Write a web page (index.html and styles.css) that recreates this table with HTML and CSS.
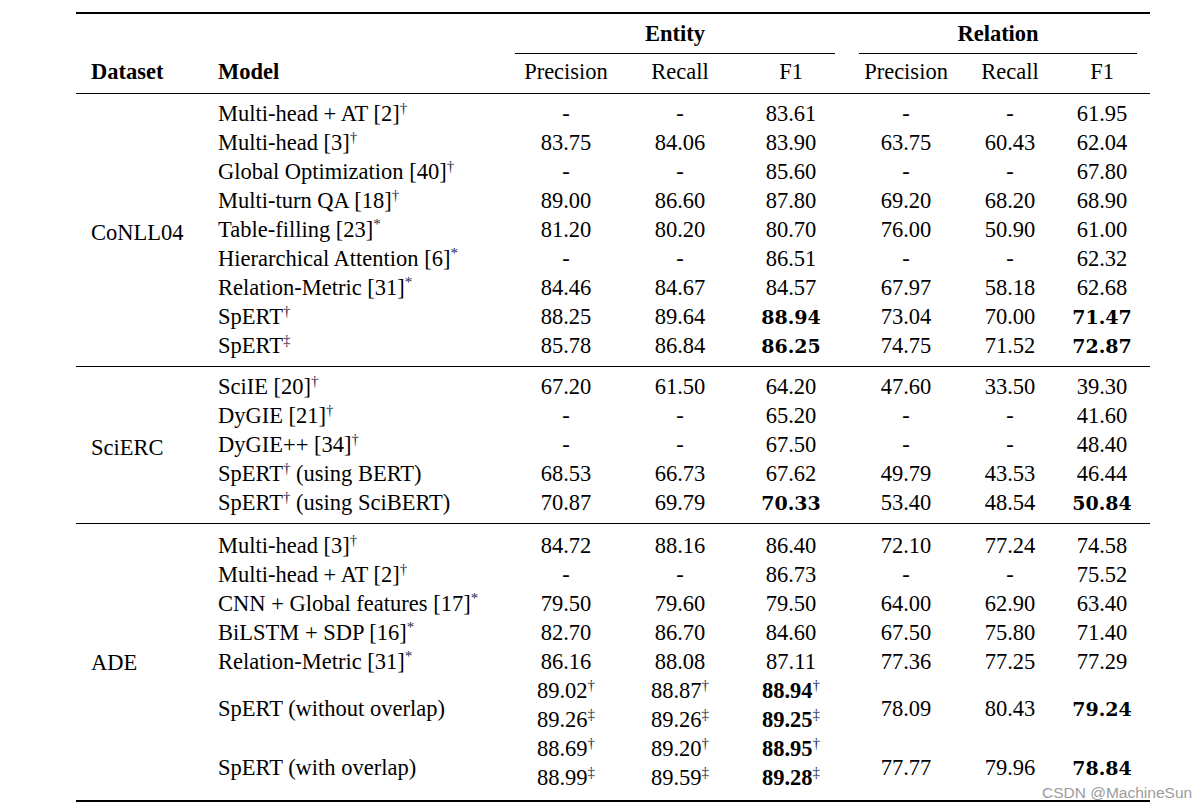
FILE: index.html
```html
<!DOCTYPE html>
<html>
<head>
<meta charset="utf-8">
<link rel="stylesheet" href="styles.css">
</head>
<body>
<div class="page">
<table class="results">
  <colgroup>
    <col class="c-ds"><col class="c-model"><col class="c-ep"><col class="c-er"><col class="c-ef"><col class="c-rp"><col class="c-rr"><col class="c-rf">
  </colgroup>
  <thead>
    <tr class="grp">
      <th></th><th></th>
      <th colspan="3"><div class="cmid cmid-e">Entity</div></th>
      <th colspan="3"><div class="cmid cmid-r">Relation</div></th>
    </tr>
    <tr class="cols">
      <th class="left bold">Dataset</th>
      <th class="left bold">Model</th>
      <th>Precision</th><th>Recall</th><th>F1</th>
      <th>Precision</th><th>Recall</th><th>F1</th>
    </tr>
  </thead>
  <tbody>
    <tr class="first">
      <td class="ds" rowspan="9">CoNLL04</td>
      <td class="model">Multi-head + AT [2]<span class="sup">†</span></td>
      <td>-</td><td>-</td><td>83.61</td><td>-</td><td>-</td><td>61.95</td>
    </tr>
    <tr><td class="model">Multi-head [3]<span class="sup">†</span></td><td>83.75</td><td>84.06</td><td>83.90</td><td>63.75</td><td>60.43</td><td>62.04</td></tr>
    <tr><td class="model">Global Optimization [40]<span class="sup">†</span></td><td>-</td><td>-</td><td>85.60</td><td>-</td><td>-</td><td>67.80</td></tr>
    <tr><td class="model">Multi-turn QA [18]<span class="sup">†</span></td><td>89.00</td><td>86.60</td><td>87.80</td><td>69.20</td><td>68.20</td><td>68.90</td></tr>
    <tr><td class="model">Table-filling [23]<span class="sup">*</span></td><td>81.20</td><td>80.20</td><td>80.70</td><td>76.00</td><td>50.90</td><td>61.00</td></tr>
    <tr><td class="model">Hierarchical Attention [6]<span class="sup">*</span></td><td>-</td><td>-</td><td>86.51</td><td>-</td><td>-</td><td>62.32</td></tr>
    <tr><td class="model">Relation-Metric [31]<span class="sup">*</span></td><td>84.46</td><td>84.67</td><td>84.57</td><td>67.97</td><td>58.18</td><td>62.68</td></tr>
    <tr><td class="model">SpERT<span class="sup">†</span></td><td>88.25</td><td>89.64</td><td><span class="bx">88.94</span></td><td>73.04</td><td>70.00</td><td><span class="bx">71.47</span></td></tr>
    <tr class="last"><td class="model">SpERT<span class="sup">‡</span></td><td>85.78</td><td>86.84</td><td><span class="bx">86.25</span></td><td>74.75</td><td>71.52</td><td><span class="bx">72.87</span></td></tr>
  </tbody>
  <tbody>
    <tr class="first">
      <td class="ds" rowspan="5">SciERC</td>
      <td class="model">SciIE [20]<span class="sup">†</span></td>
      <td>67.20</td><td>61.50</td><td>64.20</td><td>47.60</td><td>33.50</td><td>39.30</td>
    </tr>
    <tr><td class="model">DyGIE [21]<span class="sup">†</span></td><td>-</td><td>-</td><td>65.20</td><td>-</td><td>-</td><td>41.60</td></tr>
    <tr><td class="model">DyGIE++ [34]<span class="sup">†</span></td><td>-</td><td>-</td><td>67.50</td><td>-</td><td>-</td><td>48.40</td></tr>
    <tr><td class="model">SpERT<span class="sup">†</span> (using BERT)</td><td>68.53</td><td>66.73</td><td>67.62</td><td>49.79</td><td>43.53</td><td>46.44</td></tr>
    <tr class="last"><td class="model">SpERT<span class="sup">†</span> (using SciBERT)</td><td>70.87</td><td>69.79</td><td><span class="bx">70.33</span></td><td>53.40</td><td>48.54</td><td><span class="bx">50.84</span></td></tr>
  </tbody>
  <tbody class="ade">
    <tr class="first">
      <td class="ds" rowspan="9">ADE</td>
      <td class="model">Multi-head [3]<span class="sup">†</span></td>
      <td>84.72</td><td>88.16</td><td>86.40</td><td>72.10</td><td>77.24</td><td>74.58</td>
    </tr>
    <tr><td class="model">Multi-head + AT [2]<span class="sup">†</span></td><td>-</td><td>-</td><td>86.73</td><td>-</td><td>-</td><td>75.52</td></tr>
    <tr><td class="model">CNN + Global features [17]<span class="sup">*</span></td><td>79.50</td><td>79.60</td><td>79.50</td><td>64.00</td><td>62.90</td><td>63.40</td></tr>
    <tr><td class="model">BiLSTM + SDP [16]<span class="sup">*</span></td><td>82.70</td><td>86.70</td><td>84.60</td><td>67.50</td><td>75.80</td><td>71.40</td></tr>
    <tr><td class="model">Relation-Metric [31]<span class="sup">*</span></td><td>86.16</td><td>88.08</td><td>87.11</td><td>77.36</td><td>77.25</td><td>77.29</td></tr>
    <tr>
      <td class="model pair" rowspan="2">SpERT (without overlap)</td>
      <td>89.02<span class="sup">†</span></td><td>88.87<span class="sup">†</span></td><td><b>88.94</b><span class="sup">†</span></td>
      <td class="pair" rowspan="2">78.09</td><td class="pair" rowspan="2">80.43</td><td class="pair" rowspan="2"><span class="bx">79.24</span></td>
    </tr>
    <tr>
      <td>89.26<span class="sup">‡</span></td><td>89.26<span class="sup">‡</span></td><td><b>89.25</b><span class="sup">‡</span></td>
    </tr>
    <tr>
      <td class="model" rowspan="2">SpERT (with overlap)</td>
      <td>88.69<span class="sup">†</span></td><td>89.20<span class="sup">†</span></td><td><b>88.95</b><span class="sup">†</span></td>
      <td rowspan="2">77.77</td><td rowspan="2">79.96</td><td rowspan="2"><span class="bx">78.84</span></td>
    </tr>
    <tr class="last">
      <td>88.99<span class="sup">‡</span></td><td>89.59<span class="sup">‡</span></td><td><b>89.28</b><span class="sup">‡</span></td>
    </tr>
  </tbody>
</table>
<div class="watermark">CSDN @MachineSun</div>
</div>
</body>
</html>
```

FILE: styles.css
```css
html, body {
  margin: 0;
  padding: 0;
  background: #ffffff;
}

body {
  font-family: "Liberation Serif", "Times New Roman", serif;
  color: #000000;
}

.page {
  position: relative;
  width: 1204px;
  height: 808px;
  box-sizing: border-box;
  padding: 12px 0 0 76px;
}

.results {
  width: 1074px;
  table-layout: fixed;
  border-collapse: collapse;
  border-top: 2px solid #000;
  border-bottom: 2px solid #000;
  font-size: 22.5px;
}

.c-ds { width: 127px; }
.c-model { width: 305px; }
.c-ep { width: 116px; }
.c-er { width: 112px; }
.c-ef { width: 110px; }
.c-rp { width: 120px; }
.c-rr { width: 88px; }
.c-rf { width: 96px; }

.results th,
.results td {
  padding: 0;
  font-weight: normal;
  text-align: center;
  white-space: nowrap;
  line-height: 29px;
}

.results thead {
  border-bottom: 1px solid #000;
}

.results tbody + tbody {
  border-top: 1px solid #000;
}

.grp th {
  vertical-align: bottom;
}

.cmid {
  font-weight: bold;
  height: 39px;
  line-height: 40px;
  border-bottom: 1px solid #000;
}

.cmid-e { margin: 0 11px 0 7px; }
.cmid-r { margin: 0 13px 0 13px; }

.cols th {
  line-height: 36px;
  padding-bottom: 3px;
  vertical-align: top;
}

.cols th.left {
  text-align: left;
  padding-left: 15px;
}

.cols th.bold {
  font-weight: bold;
}

.results tr.first > td {
  padding-top: 5px;
}

.results tr.last > td {
  padding-bottom: 6px;
}

.results .ade tr.first > td {
  padding-top: 7px;
}

.results .ade tr.last > td {
  padding-bottom: 8px;
}

.results td.ds {
  padding: 0 0 0 15px;
  text-align: left;
  vertical-align: middle;
}

.results .ade tr.first > td.ds {
  padding: 0 0 0 15px;
}

.results td.model {
  text-align: left;
  padding-left: 15px;
}

.results td.pair {
  padding-top: 6px;
}

.sup {
  position: relative;
  top: -8px;
  font-size: 15px;
  line-height: 0;
  color: #23284a;
}

.bx {
  font-family: "DejaVu Serif", serif;
  font-weight: bold;
  font-size: 19px;
  line-height: 0;
}

b {
  font-weight: bold;
}

.watermark {
  position: absolute;
  left: 1042px;
  top: 784px;
  font-family: "Liberation Sans", Arial, sans-serif;
  font-size: 15.5px;
  line-height: 18px;
  color: #9c9c9c;
  white-space: nowrap;
}
```
